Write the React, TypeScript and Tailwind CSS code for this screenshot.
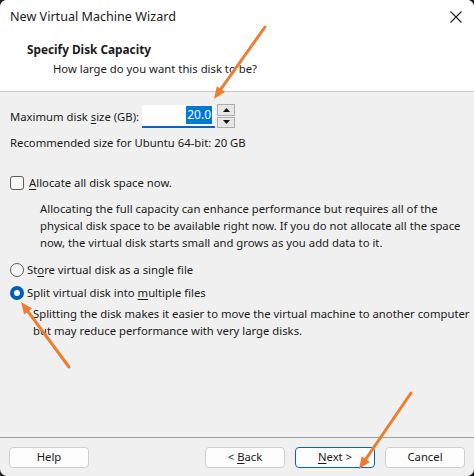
import React from "react";

const font = { fontFamily: '"Noto Sans", "Liberation Sans", sans-serif' };

function U({ children }: { children: React.ReactNode }) {
  return <span className="underline underline-offset-2">{children}</span>;
}

function Btn({ children, primary }: { children: React.ReactNode; primary?: boolean }) {
  return (
    <div
      className={
        "w-[80px] h-[21px] rounded-[4px] flex items-center justify-center text-[11.3px] text-[#1a1a1a] whitespace-pre " +
        (primary ? "border border-[#0067c0] bg-[#fdfdfd]" : "border border-[#cfcfcf] bg-[#fdfdfd]")
      }
    >
      {children}
    </div>
  );
}

export default function App() {
  return (
    <div className="w-[474px] h-[476px] bg-[#1c1c1c] relative overflow-hidden" style={font}>
      <div className="w-[474px] h-[476px] rounded-[7px] overflow-hidden flex flex-col bg-[#f0f0f0] text-[#1a1a1a]">
        {/* header */}
        <div className="bg-white h-[91px] border-b border-[#c8c8c8] box-content flex flex-col">
          <div className="h-[34px] flex items-center justify-between pl-[10px] pr-[10px]">
            <span className="text-[12.6px]">New Virtual Machine Wizard</span>
            <svg width="14" height="14" viewBox="0 0 14 14" className="mr-[1px]">
              <path d="M1.5 1.5 L12.5 12.5 M12.5 1.5 L1.5 12.5" stroke="#222" strokeWidth="1.1" />
            </svg>
          </div>
          <div className="mt-[7px] pl-[27px] text-[11.8px] font-bold leading-[17px]">Specify Disk Capacity</div>
          <div className="mt-[2px] pl-[53px] text-[11.3px] leading-[17px]">How large do you want this disk to be?</div>
        </div>

        {/* body */}
        <div className="flex-1 flex flex-col pl-[10px] text-[11.3px]">
          <div className="mt-[12px] h-[24px] flex items-center">
            <span className="w-[132px] leading-[17px] whitespace-nowrap">
              Maximum disk <U>s</U>ize (GB):
            </span>
            <div className="w-[73px] h-[23px] bg-white border-b-2 border-[#0067c0] flex items-center justify-end pr-[3px]">
              <span className="bg-[#0078d7] text-white leading-[18px] px-[1px] text-[12px]">20.0</span>
            </div>
            <div className="ml-[2px] w-[18px] h-[24px] flex flex-col gap-[1px]">
              <div className="flex-1 border border-[#adadad] bg-[#e6e6e6] flex items-center justify-center">
                <svg width="7" height="4" viewBox="0 0 7 4"><path d="M0 4 L3.5 0 L7 4 Z" fill="#111" /></svg>
              </div>
              <div className="flex-1 border border-[#adadad] bg-[#e6e6e6] flex items-center justify-center">
                <svg width="7" height="4" viewBox="0 0 7 4"><path d="M0 0 L3.5 4 L7 0 Z" fill="#111" /></svg>
              </div>
            </div>
          </div>
          <div className="mt-[6px] leading-[17px]">Recommended size for Ubuntu 64-bit: 20 GB</div>

          <div className="mt-[23px] flex items-center h-[17px]">
            <div className="w-[14px] h-[14px] rounded-[3px] border border-[#5c5c5c] bg-[#f7f7f7]" />
            <span className="ml-[5px] leading-[17px]">
              <U>A</U>llocate all disk space now.
            </span>
          </div>
          <div className="mt-[9px] ml-[30px] leading-[17px] whitespace-nowrap">
            Allocating the full capacity can enhance performance but requires all of the
            <br />
            physical disk space to be available right now. If you do not allocate all the space
            <br />
            now, the virtual disk starts small and grows as you add data to it.
          </div>

          <div className="mt-[10px] flex items-center h-[17px]">
            <div className="w-[14px] h-[14px] rounded-full border border-[#5c5c5c] bg-[#f7f7f7]" />
            <span className="ml-[3px] leading-[17px]">
              St<U>o</U>re virtual disk as a single file
            </span>
          </div>
          <div className="mt-[6px] flex items-center h-[17px]">
            <div className="w-[14px] h-[14px] rounded-full bg-[#005fb8] flex items-center justify-center">
              <div className="w-[6px] h-[6px] rounded-full bg-white" />
            </div>
            <span className="ml-[3px] leading-[17px]">
              Split virtual disk into <U>m</U>ultiple files
            </span>
          </div>
          <div className="mt-[4px] ml-[23px] leading-[17px] whitespace-nowrap">
            Splitting the disk makes it easier to move the virtual machine to another computer
            <br />
            but may reduce performance with very large disks.
          </div>
        </div>

        {/* footer */}
        <div className="h-[39px] border-t border-[#a0a0a0] flex items-start pt-[9px] px-[9px]">
          <Btn>Help</Btn>
          <div className="flex-1" />
          <div className="flex gap-[10px]">
            <Btn>
              {"< "}
              <U>B</U>
              {"ack"}
            </Btn>
            <Btn primary>
              <U>N</U>
              {"ext >"}
            </Btn>
            <Btn>Cancel</Btn>
          </div>
        </div>
      </div>

      {/* annotation arrows */}
      <svg className="absolute inset-0 pointer-events-none" width="474" height="476" viewBox="0 0 474 476">
        <g stroke="#ed7d31" strokeWidth="3" strokeLinecap="round" fill="#ed7d31">
          <line x1="265" y1="27" x2="220.9" y2="89.2" />
          <polygon points="214,99 225,92.1 216.8,86.3" stroke="none" />
          <line x1="69" y1="367" x2="28.1" y2="311.6" />
          <polygon points="21,302 32.1,308.6 24.1,314.6" stroke="none" />
          <line x1="411" y1="393" x2="365.8" y2="459.1" />
          <polygon points="359,469 369.9,461.9 361.7,456.3" stroke="none" />
        </g>
      </svg>
    </div>
  );
}
